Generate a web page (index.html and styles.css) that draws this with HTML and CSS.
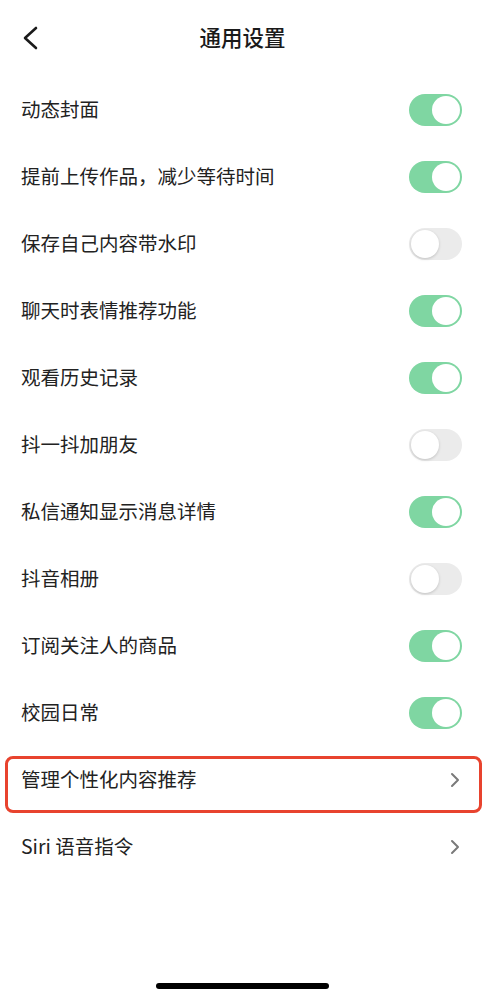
FILE: index.html
```html
<!DOCTYPE html>
<html lang="zh-CN">
<head>
    <meta charset="UTF-8">
    <meta name="viewport" content="width=device-width, initial-scale=1.0">
    <title>通用设置</title>
    <link rel="stylesheet" href="styles.css">
</head>
<body>
    <div class="page">
        <header class="topbar">
            <button class="back" aria-label="返回">
                <svg width="16" height="24" viewBox="0 0 16 24"><path d="M14 2 L3 12 L14 22" fill="none" stroke="#1a1a1a" stroke-width="2.6" stroke-linecap="round" stroke-linejoin="round"/></svg>
            </button>
            <h1 class="title">通用设置</h1>
        </header>

        <ul class="list">
            <li class="row"><span class="label">动态封面</span><span class="switch on"></span></li>
            <li class="row"><span class="label">提前上传作品，减少等待时间</span><span class="switch on"></span></li>
            <li class="row"><span class="label">保存自己内容带水印</span><span class="switch"></span></li>
            <li class="row"><span class="label">聊天时表情推荐功能</span><span class="switch on"></span></li>
            <li class="row"><span class="label">观看历史记录</span><span class="switch on"></span></li>
            <li class="row"><span class="label">抖一抖加朋友</span><span class="switch"></span></li>
            <li class="row"><span class="label">私信通知显示消息详情</span><span class="switch on"></span></li>
            <li class="row"><span class="label">抖音相册</span><span class="switch"></span></li>
            <li class="row"><span class="label">订阅关注人的商品</span><span class="switch on"></span></li>
            <li class="row"><span class="label">校园日常</span><span class="switch on"></span></li>
            <li class="row link marked"><span class="label">管理个性化内容推荐</span>
                <svg class="arrow" width="10" height="16" viewBox="0 0 10 16"><path d="M2 2 L8 8 L2 14" fill="none" stroke="#7a7a7a" stroke-width="2" stroke-linecap="round" stroke-linejoin="round"/></svg>
            </li>
            <li class="row link"><span class="label">Siri 语音指令</span>
                <svg class="arrow" width="10" height="16" viewBox="0 0 10 16"><path d="M2 2 L8 8 L2 14" fill="none" stroke="#7a7a7a" stroke-width="2" stroke-linecap="round" stroke-linejoin="round"/></svg>
            </li>
        </ul>

        <div class="home-bar"></div>
    </div>
</body>
</html>
```

FILE: styles.css
```css
* {
    box-sizing: border-box;
}
body {
    margin: 0;
    background-color: #ffffff;
    font-family: "Noto Sans CJK SC", "Noto Sans", sans-serif;
    color: #1f1f1f;
}
.page {
    width: 485px;
    height: 1000px;
    display: flex;
    flex-direction: column;
}
.topbar {
    height: 76px;
    padding-bottom: 4px;
    display: flex;
    align-items: center;
    justify-content: center;
    position: relative;
}
.back {
    position: absolute;
    left: 22px;
    top: 26px;
    padding: 0;
    border: none;
    background: none;
    display: flex;
}
.title {
    margin: 0;
    font-size: 21.5px;
    font-weight: 500;
    color: #1a1a1a;
}
.list {
    list-style: none;
    margin: 0;
    padding: 0;
}
.row {
    height: 67px;
    padding: 0 23px 0 21px;
    display: flex;
    align-items: center;
    justify-content: space-between;
    position: relative;
}
.label {
    font-size: 19.5px;
    color: #222222;
    padding-bottom: 2px;
}
.link {
    padding-right: 25px;
}
.marked::after {
    content: "";
    position: absolute;
    top: 10px;
    bottom: 0;
    left: 5px;
    right: 3px;
    border: 3px solid #e8432e;
    border-radius: 8px;
}
.switch {
    width: 53px;
    height: 32px;
    border-radius: 16px;
    background-color: #ebebeb;
    position: relative;
    flex-shrink: 0;
}
.switch::after {
    content: "";
    position: absolute;
    top: 2px;
    left: 2px;
    width: 28px;
    height: 28px;
    border-radius: 50%;
    background-color: #ffffff;
    box-shadow: 0 1px 3px rgba(0, 0, 0, 0.18);
}
.switch.on {
    background-color: #7fd6a2;
}
.switch.on::after {
    left: auto;
    right: 2px;
    box-shadow: none;
}
.arrow {
    display: block;
}
.home-bar {
    margin: auto auto 11px;
    width: 173px;
    height: 6px;
    border-radius: 3px;
    background-color: #000000;
}
```
